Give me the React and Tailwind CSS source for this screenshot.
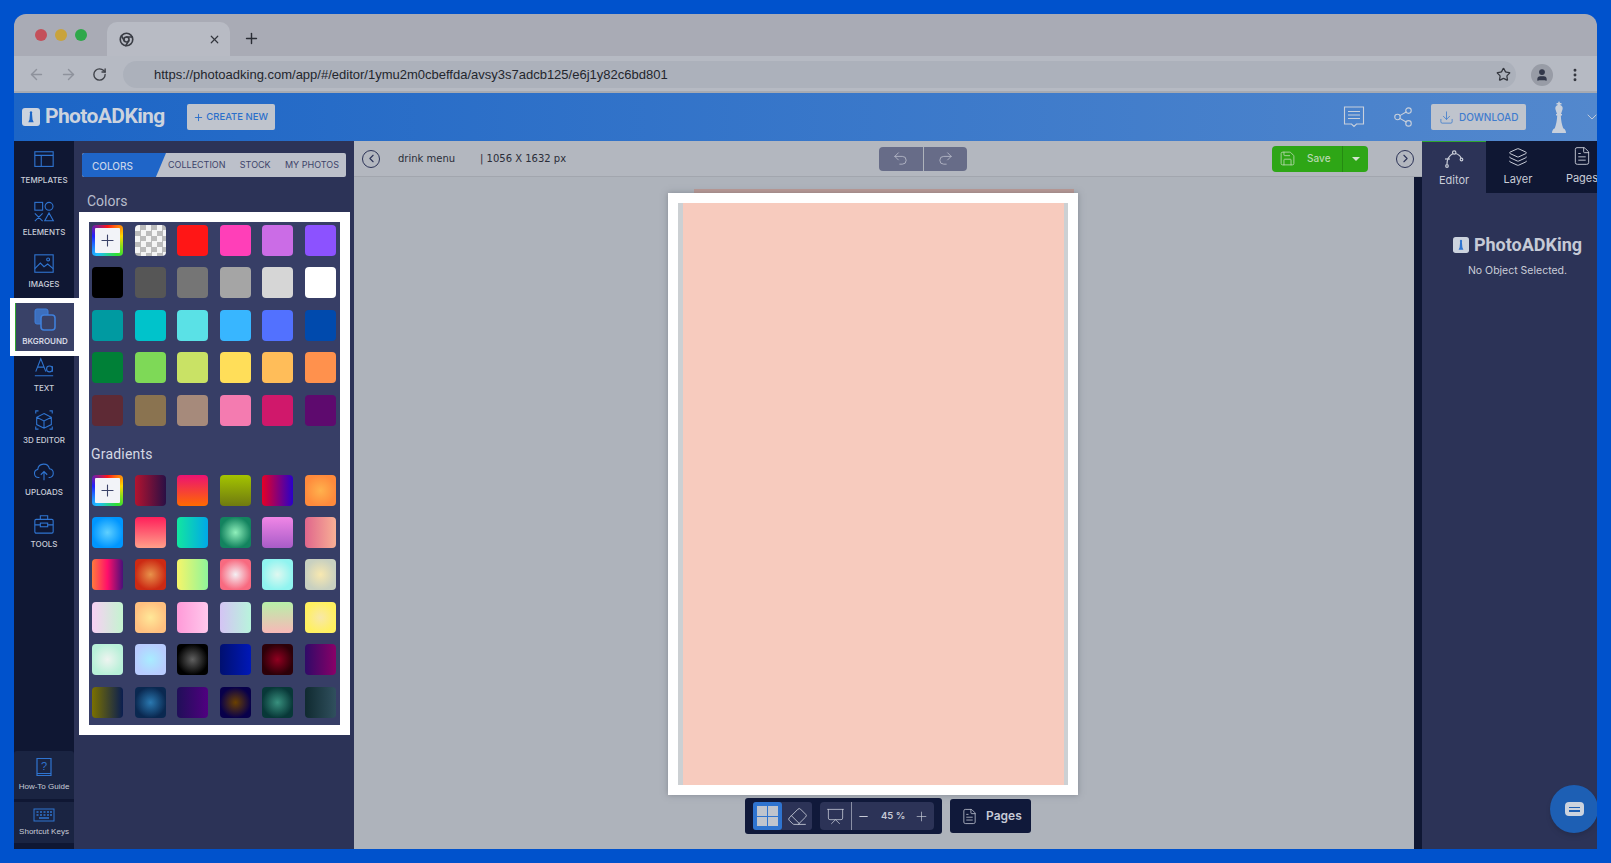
import React from 'react';
import { ArrowLeft, ArrowRight, RotateCw, Star, User, EllipsisVertical, X, Plus, ChevronDown, ChevronLeft, ChevronRight, Undo2, Redo2, Minus, Save, Share2, Download, FileText, Layers, Eraser, Presentation, Chrome } from 'lucide-react';

const solidColors = [
  'bg-[#000000]', 'bg-[#565656]', 'bg-[#757575]', 'bg-[#a5a5a5]', 'bg-[#d6d6d6]', 'bg-[#ffffff]',
  'bg-[#009aa1]', 'bg-[#00c3cb]', 'bg-[#5ae1e6]', 'bg-[#38b6ff]', 'bg-[#5271ff]', 'bg-[#004aad]',
  'bg-[#008037]', 'bg-[#7ed957]', 'bg-[#c9e265]', 'bg-[#ffde59]', 'bg-[#ffbd59]', 'bg-[#ff914d]',
  'bg-[#5e2a35]', 'bg-[#8a7350]', 'bg-[#a68a7b]', 'bg-[#f47bb0]', 'bg-[#d0186b]', 'bg-[#5e0a6e]',
];

const firstRow = ['bg-[#ff1616]', 'bg-[#ff3fb8]', 'bg-[#cb6ce6]', 'bg-[#8c52ff]'];

const gradients = [
  'bg-[linear-gradient(90deg,#b3132f,#2a0f45)]', 'bg-[linear-gradient(180deg,#ec1273,#ff6a00)]', 'bg-[linear-gradient(180deg,#a4c400,#6f7a10)]', 'bg-[linear-gradient(90deg,#e60026,#2a00c8)]', 'bg-[radial-gradient(circle_closest-side,#ffb24d,#ff8a3c)]',
  'bg-[radial-gradient(circle_closest-side,#5fd0ff,#0096ff)]', 'bg-[linear-gradient(180deg,#ff1f5a,#ffa08a)]', 'bg-[linear-gradient(90deg,#12e6a0,#00a8e8)]', 'bg-[radial-gradient(circle_closest-side,#8ff0bb,#13835f)]', 'bg-[linear-gradient(180deg,#f086e6,#a85cc8)]', 'bg-[linear-gradient(90deg,#e0668c,#f8b095)]',
  'bg-[linear-gradient(90deg,#ff7a3c,#ff0f6a,#4b0f7a)]', 'bg-[radial-gradient(circle_closest-side,#e8924a,#cc2a14)]', 'bg-[linear-gradient(90deg,#f6f56a,#8ff59a)]', 'bg-[radial-gradient(circle_closest-side,#f4f0f4,#f86a80)]', 'bg-[radial-gradient(circle_closest-side,#dff8f0,#90f4f0)]', 'bg-[radial-gradient(circle_closest-side,#f8e8b0,#c8d0c0)]',
  'bg-[linear-gradient(90deg,#f8d0f4,#c4f4d0)]', 'bg-[radial-gradient(circle_closest-side,#ffe898,#ffc080)]', 'bg-[linear-gradient(90deg,#ff9ad8,#ffc8ec)]', 'bg-[linear-gradient(90deg,#d4c4f4,#b8f4dc)]', 'bg-[linear-gradient(180deg,#b8f0a8,#f8b8b8)]', 'bg-[radial-gradient(circle_closest-side,#f8e8a8,#fff060)]',
  'bg-[radial-gradient(circle_closest-side,#eef4f0,#b8f0d8)]', 'bg-[radial-gradient(circle_closest-side,#a8ecff,#b8ccff)]', 'bg-[radial-gradient(circle_closest-side,#606060,#000000)]', 'bg-[linear-gradient(90deg,#001070,#0018b8)]', 'bg-[radial-gradient(circle_closest-side,#900020,#2c0008)]', 'bg-[linear-gradient(90deg,#300a68,#8a0068)]',
  'bg-[linear-gradient(90deg,#7a7000,#0a1e50)]', 'bg-[radial-gradient(circle_closest-side,#2a78b0,#0a2850)]', 'bg-[linear-gradient(90deg,#200f58,#500080)]', 'bg-[radial-gradient(circle_closest-side,#6a4000,#08004a)]', 'bg-[radial-gradient(circle_closest-side,#38907e,#083838)]', 'bg-[linear-gradient(90deg,#102a30,#30505e)]',
];

function AddSwatch() {
  return (
    <div className="w-[31px] h-[31px] rounded-[4px] p-[3px] bg-[conic-gradient(#ff1616,#ffd800,#30e030,#20c0ff,#2020ff,#ff1616)]">
      <div className="w-full h-full bg-[#f2f3f8] rounded-[1px] flex items-center justify-center">
        <Plus size={19} strokeWidth={1.4} className="text-[#3c4369]" />
      </div>
    </div>
  );
}

function Logo({ iconClass, chessClass, textClass, size }) {
  return (
    <div className="flex items-center gap-[5px]">
      <svg width={size} height={size} viewBox="0 0 18 18" className={iconClass}>
        <rect width="18" height="18" rx="3" fill="currentColor" />
        <path d="M9 3.2a1.3 1.3 0 0 1 1 2.1l.5 6.2 1.2 2.8H6.3l1.2-2.8.5-6.2a1.3 1.3 0 0 1 1-2.1z" className={chessClass} />
      </svg>
      <span className={textClass}>PhotoADKing</span>
    </div>
  );
}

const stroke = { fill: 'none', stroke: 'currentColor', strokeWidth: 1.2 };

const sideItems = [
  {
    label: 'TEMPLATES',
    icon: <g {...stroke}><rect x="2" y="3" width="20" height="16" /><path d="M2 7h20M9 7v12" /></g>,
  },
  {
    label: 'ELEMENTS',
    icon: <g {...stroke}><rect x="2" y="1.5" width="8.5" height="8.5" /><circle cx="17.5" cy="5.8" r="4.3" /><path d="M2 13.5l8.5 8.5M10.5 13.5L2 22M17.5 13l4.7 8.5h-9.4z" /></g>,
  },
  {
    label: 'IMAGES',
    icon: <g {...stroke}><rect x="2" y="2" width="20" height="19" /><path d="M2 17l6-6 4 4 4-3 6 5" /><circle cx="16.5" cy="7" r="1.6" /></g>,
  },
  {
    label: 'BKGROUND',
    active: true,
    icon: <g fill="#3f7fda" stroke="#3f7fda" strokeWidth="1"><rect x="2" y="2" width="13" height="15" rx="2" fillOpacity=".75" /><rect x="8" y="8" width="14" height="15" rx="3" fill="#394167" strokeWidth="1.6" /></g>,
  },
  {
    label: 'TEXT',
    icon: <g {...stroke}><path d="M3 16L8.5 2 14 16M5 11h7" /><circle cx="18" cy="13" r="3.2" /><path d="M21.2 10v6M2 20.5h20" /></g>,
  },
  {
    label: '3D EDITOR',
    icon: <g {...stroke}><path d="M12 5l8 4v8l-8 4-8-4V9zM4 9l8 4 8-4M12 13v8M3 5V2h3M21 5V2h-3M3 19v3h3M21 19v3h-3" /></g>,
  },
  {
    label: 'UPLOADS',
    icon: <g {...stroke}><path d="M7 18H6a4.5 4.5 0 0 1-.8-8.9A6.5 6.5 0 0 1 18 8.5a4.8 4.8 0 0 1 0 9.5h-1M12 21v-9M8.5 15l3.5-3.5 3.5 3.5" /></g>,
  },
  {
    label: 'TOOLS',
    icon: <g {...stroke}><rect x="2" y="7" width="20" height="15" rx="1.5" /><path d="M8 7V3h8v4M2 13h6M16 13h6" /><rect x="8" y="11" width="8" height="4" /></g>,
  },
];

function SideItem({ item }) {
  if (item.active) {
    return (
      <div className="relative z-10 h-[48px] mt-[1px] mb-[3px] ml-[1px] pt-[4px] flex flex-col items-center bg-[#394167] border-l border-[#2fa52f] outline-[5px] outline-solid outline-white">
        <svg width="24" height="24" viewBox="0 0 24 24">{item.icon}</svg>
        <span className="mt-[4px] text-[8px] leading-[12px] font-semibold text-[#d5d8e4]">{item.label}</span>
      </div>
    );
  }
  return (
    <div className="h-[52px] pt-[3px] flex flex-col items-center text-[#2f74d0]">
      <svg width="22" height="22" viewBox="0 0 24 24">{item.icon}</svg>
      <span className="mt-[3px] text-[8px] leading-[12px] font-medium text-[#c9cdd8]">{item.label}</span>
    </div>
  );
}

export default function App() {
  return (
    <div className="w-[1611px] h-[863px] overflow-hidden bg-[#0052cc] p-[14px] font-['Inter',sans-serif]">
      <div className="w-[1583px] h-[835px] flex flex-col">

        {/* browser chrome */}
        <div className="h-[42px] shrink-0 rounded-t-[12px] bg-[#a9abb5] flex pl-[21px] pt-[8px]">
          <div className="flex gap-[8px] pt-[7px] w-[72px]">
            <span className="w-3 h-3 rounded-full bg-[#c4505a]"></span>
            <span className="w-3 h-3 rounded-full bg-[#c9a33c]"></span>
            <span className="w-3 h-3 rounded-full bg-[#2fa84a]"></span>
          </div>
          <div className="w-[123px] h-[34px] rounded-t-[10px] bg-[#b8bbc4] flex items-center justify-between pl-[12px] pr-[9px]">
            <Chrome size={15} strokeWidth={2.6} className="text-[#3a3d45]" />
            <X size={13} strokeWidth={2.2} className="text-[#33363e]" />
          </div>
          <Plus size={17} strokeWidth={2} className="text-[#2a2d35] ml-[13px] mt-[8px]" />
        </div>
        <div className="h-[37px] shrink-0 bg-[#b6bac3] border-b-2 border-[#a6aab2] flex items-center pl-[14px] pr-[14px] pt-[2px]">
          <ArrowLeft size={17} className="text-[#8e929c]" />
          <ArrowRight size={17} className="text-[#8e929c] ml-[15px]" />
          <RotateCw size={15} strokeWidth={2.2} className="text-[#3f4249] ml-[15px]" />
          <div className="ml-[16px] w-[1393px] h-[27px] rounded-full bg-[#acb1bb] flex items-center justify-between pl-[31px] pr-[5px]">
            <span className="font-['Liberation_Sans',sans-serif] text-[13px] text-[#23262d]">https://photoadking.com/app/#/editor/1ymu2m0cbeffda/avsy3s7adcb125/e6j1y82c6bd801</span>
            <Star size={15} strokeWidth={2} className="text-[#33363e]" />
          </div>
          <div className="ml-[15px] w-[22px] h-[22px] rounded-full bg-[#989ca6] flex items-center justify-center">
            <User size={14} fill="currentColor" className="text-[#33384a]" />
          </div>
          <EllipsisVertical size={16} strokeWidth={2.4} className="text-[#33363e] ml-[14px]" />
        </div>

        {/* app header */}
        <div className="h-[48px] shrink-0 bg-[linear-gradient(90deg,#1c65c6,#5388cd)] flex items-center pl-[8px]">
          <Logo size={18} iconClass="text-[#ccd3de]" chessClass="fill-[#1c65c6]" textClass="font-['Roboto',sans-serif] font-bold text-[21px] tracking-[-0.6px] text-[#ccd3de]" />
          <button className="ml-[22px] w-[88px] h-[26px] rounded-[2px] bg-[#bfc4cd] flex items-center justify-center gap-[2px] text-[#2a6fcb] text-[9.5px] font-medium">
            <Plus size={11} />CREATE NEW
          </button>
          <div className="ml-auto flex items-center text-[#c8d0dc]">
            <svg width="22" height="24" viewBox="0 0 22 24" fill="none" stroke="currentColor" strokeWidth="1.1">
              <path d="M1.5 2h19v17h-7l-2.5 2.5L8.5 19h-7zM5 6.5h12M5 10h12M5 13.5h12" />
            </svg>
            <Share2 size={22} strokeWidth={1.2} className="ml-[27px]" />
            <div className="ml-[17px] w-[95px] h-[26px] rounded-[2px] bg-[#bfc4cd] flex items-center pl-[8px] text-[#3f7ccd]">
              <Download size={15} strokeWidth={1.3} />
              <span className="ml-[5px] text-[10px] font-medium">DOWNLOAD</span>
            </div>
            <svg width="16" height="33" viewBox="0 0 16 33" fill="currentColor" className="ml-[25px]">
              <path d="M8 0l1 2h1.5v1.4H9l.3.6c2 .5 2.8 2.5 2.2 4.5L10 13h1v1.6H9.8c.2 5 1 9 2.4 12.6 2 1 2.8 2.6 2.8 4.8H1c0-2.2.8-3.8 2.8-4.8C5.200 23.600 6 19.600 6.200 14.600H5V13h1L4.500 8.500C3.900 6.500 4.700 4.500 6.700 4L7 3.400H5.500V2H7z" />
            </svg>
            <ChevronDown size={16} strokeWidth={1.4} className="ml-[17px] mr-[-3px]" />
          </div>
        </div>

        {/* workspace */}
        <div className="flex-1 min-h-0 flex">

          {/* left icon rail */}
          <div className="w-[60px] shrink-0 bg-[#0f1733] pt-[5px] flex flex-col">
            {sideItems.map((item) => <SideItem key={item.label} item={item} />)}
            <div className="mt-auto mb-[3px] h-[48px] bg-[#1a2442] flex flex-col items-center pt-[6px] text-[#2f74d0] rounded-t-[3px]">
              <svg width="20" height="20" viewBox="0 0 20 20" fill="none" stroke="currentColor" strokeWidth="1.2">
                <path d="M3 1.500h14v15H3zM3 16.500v2h14v-2" />
                <text x="10" y="13" textAnchor="middle" fontSize="11" fill="currentColor" stroke="none" fontFamily="Liberation Sans">?</text>
              </svg>
              <span className="mt-[4px] text-[8px] leading-[12px] font-['Liberation_Sans',sans-serif] text-[#c9cdd8]">How-To Guide</span>
            </div>
            <div className="mb-[6px] h-[41px] bg-[#1a2442] flex flex-col items-center pt-[5px] text-[#2f74d0]">
              <svg width="22" height="16" viewBox="0 0 22 16" fill="none" stroke="currentColor" strokeWidth="1">
                <rect x="1" y="2" width="20" height="12" />
                <path d="M3.500 5h2M7 5h2M10.500 5h2M14 5h2M17 5h2M3.500 8h2M7 8h2M10.500 8h2M14 8h2M17 8h2M6 11h10" strokeWidth="1.4" />
              </svg>
              <span className="mt-[3px] text-[8px] leading-[12px] font-['Liberation_Sans',sans-serif] text-[#c9cdd8]">Shortcut Keys</span>
            </div>
          </div>

          {/* color panel */}
          <div className="w-[280px] shrink-0 bg-[#2c3357] pt-[12px]">
            <div className="mx-[8px] h-[24px] rounded-[2px] bg-[#bcc0ca] flex items-center overflow-hidden">
              <div className="w-[84px] h-full rounded-l-[2px] bg-[#1f65c8] [clip-path:polygon(0_0,100%_0,88%_100%,0_100%)] flex items-center pl-[10px] pt-[2px] text-[10px] font-medium text-[#c6d4ea]">COLORS</div>
              <div className="flex-1 flex justify-between pl-[2px] pr-[7px] text-[#3c4369] text-[9px]">
                <span>COLLECTION</span>
                <span>STOCK</span>
                <span>MY PHOTOS</span>
              </div>
            </div>
            <p className="ml-[13px] mt-[14px] h-[21px] text-[14px] leading-[21px] text-[#b8bdcc] font-['Roboto',sans-serif]">Colors</p>
            <div className="ml-[5px] w-[271px] border-[10px] border-white bg-[#373e66] h-[523px] pl-[3px] pt-[3px]">
              <div className="grid grid-cols-[repeat(6,31px)] gap-x-[11.6px] gap-y-[11.4px]">
                <AddSwatch />
                <div className="w-[31px] h-[31px] rounded-[4px] bg-[repeating-conic-gradient(#bbbbbb_0_25%,#f4f4f4_0_50%)] bg-size-[11px_11px]"></div>
                {firstRow.concat(solidColors).map((c, i) => (
                  <div key={i} className={`w-[31px] h-[31px] rounded-[4px] ${c}`}></div>
                ))}
              </div>
              <p className="-ml-[1px] mt-[18px] h-[31px] text-[14px] leading-[20px] text-[#d5d8e4] font-['Roboto',sans-serif] tracking-[0.2px]">Gradients</p>
              <div className="grid grid-cols-[repeat(6,31px)] gap-x-[11.6px] gap-y-[11.4px]">
                <AddSwatch />
                {gradients.map((c, i) => (
                  <div key={i} className={`w-[31px] h-[31px] rounded-[4px] ${c}`}></div>
                ))}
              </div>
            </div>
          </div>

          {/* canvas column */}
          <div className="flex-1 min-w-0 flex flex-col bg-[#aeb3bb]">
            <div className="h-[36px] shrink-0 flex items-center bg-[#b3b7bf] border-b border-[#a2a6ae] text-[#2c3357]">
              <div className="w-[34px] flex justify-center">
                <div className="w-[18px] h-[18px] rounded-full border border-[#2c3357] flex items-center justify-center"><ChevronLeft size={13} /></div>
              </div>
              <span className="ml-[10px] w-[82px] font-['DejaVu_Sans',sans-serif] text-[10px] text-[#2a2d38]">drink menu</span>
              <span className="font-['DejaVu_Sans',sans-serif] text-[10px] text-[#2a2d38]">| 1056 X 1632 px</span>
              <div className="ml-[313px] w-[88px] h-[24px] rounded-[4px] bg-[#676c88] flex text-[#b9bcca]">
                <div className="flex-1 flex items-center justify-center border-r border-[#aeb3bb]"><Undo2 size={17} strokeWidth={1.2} /></div>
                <div className="flex-1 flex items-center justify-center"><Redo2 size={17} strokeWidth={1.2} /></div>
              </div>
              <div className="ml-[305px] w-[96px] h-[26px] rounded-[4px] bg-[#2ea616] flex text-[#b9d8b0]">
                <div className="w-[71px] flex items-center pl-[7px] border-r border-[#258a12]">
                  <Save size={17} strokeWidth={1.2} />
                  <span className="ml-[11px] text-[10px] font-medium">Save</span>
                </div>
                <div className="flex-1 flex items-center justify-center">
                  <span className="border-x-[4px] border-t-[4px] border-x-transparent border-t-[#d5e4d0]"></span>
                </div>
              </div>
              <div className="ml-[28px] w-[18px] h-[18px] rounded-full border border-[#2c3357] flex items-center justify-center"><ChevronRight size={13} /></div>
            </div>

            <div className="flex-1 flex">
              <div className="w-[1060px] pl-[314px] pt-[12px]">
                <div className="ml-[26px] w-[380px] h-[4px] bg-[#bb9a95]"></div>
                <div className="w-[410px] h-[602px] border-[10px] border-white bg-[#ccd0d3] px-[5px] shadow-[0_0_6px_rgba(90,95,105,0.5)]">
                  <div className="w-[381px] h-full bg-[#f7cbbe]"></div>
                </div>
                <div className="flex mt-[3px] ml-[77px] items-start">
                  <div className="w-[197px] h-[36px] rounded-[3px] bg-[#10193a] flex items-center pl-[8px]">
                    <div className="w-[59px] h-[28px] rounded-[3px] bg-[#2c3357] flex">
                      <div className="w-[29px] h-[28px] rounded-[3px] bg-[#2f74d0] grid grid-cols-2 gap-[1px] p-[4px]">
                        <span className="bg-[#bfc4cd]"></span><span className="bg-[#bfc4cd]"></span>
                        <span className="bg-[#bfc4cd]"></span><span className="bg-[#bfc4cd]"></span>
                      </div>
                      <div className="flex-1 flex items-center justify-center text-[#c6cad6]"><Eraser size={21} strokeWidth={1} /></div>
                    </div>
                    <div className="ml-[8px] w-[114px] h-[28px] rounded-[4px] bg-[#2c3357] flex items-center text-[#c6cad6]">
                      <div className="w-[32px] h-full flex items-center justify-center border-r border-[#8a8fa5]"><Presentation size={19} strokeWidth={1} /></div>
                      <Minus size={13} strokeWidth={2} className="ml-[5px]" />
                      <span className="ml-[11px] text-[9.5px] font-semibold">45 %</span>
                      <Plus size={15} strokeWidth={1.1} className="ml-[9px]" />
                    </div>
                  </div>
                  <div className="ml-[8px] mt-[1px] w-[81px] h-[34px] rounded-[3px] bg-[#10193a] flex items-center pl-[11px] text-[#c6cad6]">
                    <FileText size={17} strokeWidth={1.1} />
                    <span className="ml-[8px] text-[12px] font-semibold">Pages</span>
                  </div>
                </div>
              </div>
              <div className="flex-1 bg-[#0f1733]"></div>
            </div>
          </div>

          {/* right panel */}
          <div className="relative w-[175px] shrink-0 bg-[#2c3357] overflow-hidden">
            <div className="flex h-[52px]">
              <div className="w-[64px] shrink-0 border-t border-[#2fa52f] flex flex-col items-center pt-[6px] text-[#c9cdd8]">
                <svg width="20" height="20" viewBox="0 0 20 20" fill="none" stroke="currentColor" strokeWidth="1.2">
                  <path d="M3 16c0-5 2.500-8.500 6-10.500M11.500 5.500c2.500.5 4.500 2 5.500 4.500" />
                  <circle cx="10.200" cy="4.500" r="1.700" />
                  <circle cx="3" cy="18" r="1.300" />
                  <circle cx="17.500" cy="11.500" r="1.300" />
                  <path d="M1 11h5" />
                </svg>
                <span className="mt-[5px] text-[11px] leading-[15px]">Editor</span>
              </div>
              <div className="w-[64px] shrink-0 bg-[#0f1733] flex flex-col items-center pt-[6px] text-[#c9cdd8]">
                <Layers size={20} strokeWidth={1.2} />
                <span className="mt-[5px] text-[11px] leading-[15px]">Layer</span>
              </div>
              <div className="w-[64px] shrink-0 bg-[#0f1733] flex flex-col items-center pt-[5px] text-[#c9cdd8]">
                <FileText size={20} strokeWidth={1.1} />
                <span className="mt-[5px] text-[11px] leading-[15px]">Pages</span>
              </div>
            </div>
            <div className="mt-[38px] pl-[16px] flex justify-center">
              <Logo size={16} iconClass="text-[#ccd3de]" chessClass="fill-[#2f74d0]" textClass="font-['Roboto',sans-serif] font-bold text-[18px] text-[#c6cad6]" />
            </div>
            <p className="mt-[5px] pl-[16px] text-center text-[10.5px] text-[#c9cdd8]">No Object Selected.</p>
            <div className="absolute left-[128px] top-[644px] w-[48px] h-[48px] rounded-full bg-[#1d5fb4] shadow-md flex items-center justify-center">
              <div className="w-[19px] h-[14px] rounded-[4px] bg-[#ccd3de] flex flex-col justify-center gap-[2px] px-[4px]">
                <span className="h-[1.5px] bg-[#1d5fb4]"></span>
                <span className="h-[1.5px] bg-[#1d5fb4]"></span>
              </div>
            </div>
          </div>

        </div>
      </div>
    </div>
  );
}
